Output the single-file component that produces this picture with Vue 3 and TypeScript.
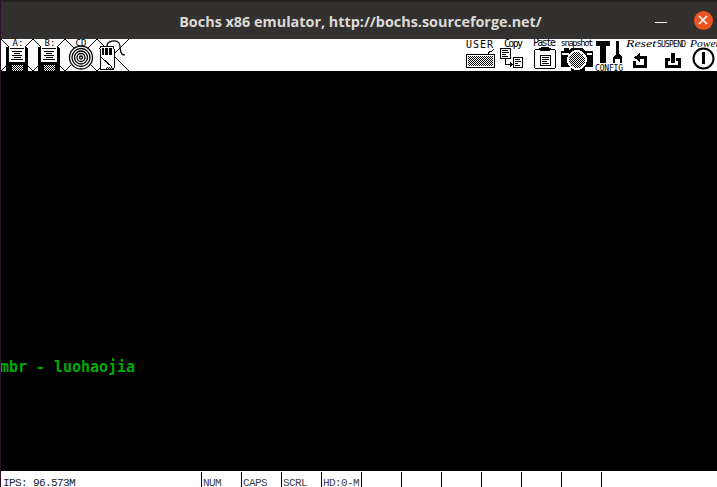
<script setup lang="ts">
const drives: string[] = ['A:', 'B:']
const rings: number[] = [11.5, 9, 6.5, 4, 1.5]
const statusCells: string[] = ['NUM', 'CAPS', 'SCRL', 'HD:0-M', '', '', '', '', '', '', '']
</script>

<template>
  <div class="window">
    <header class="titlebar">
      <h1 class="title">Bochs x86 emulator, http://bochs.sourceforge.net/</h1>
      <span class="minimize"></span>
      <span class="close">
        <svg width="10" height="10" viewBox="0 0 10 10"><path d="M1 1L9 9M9 1L1 9" stroke="#fff" stroke-width="1.6" /></svg>
      </span>
    </header>

    <div class="toolbar">
      <div class="group">
        <svg v-for="d in drives" :key="d" class="btn" viewBox="0 0 32 32">
          <defs>
            <pattern id="dither" width="2" height="2" patternUnits="userSpaceOnUse">
              <rect width="2" height="2" fill="#fff" /><rect width="1" height="1" fill="#000" /><rect x="1" y="1" width="1" height="1" fill="#000" />
            </pattern>
          </defs>
          <path class="cross" d="M0 0L32 32M32 0L0 32" />
          <path d="M5 8H25L27 10V32H5Z" fill="#000" />
          <rect x="8" y="8" width="16" height="15" fill="#fff" />
          <path class="line" d="M9 9.5H23M11 12.5H21M13 14.5H19M11 16.5H21M13 18.5H20M10 20.5H22" />
          <rect x="11" y="26" width="11" height="6" fill="url(#dither)" />
          <text class="label mono" x="17" y="6.5" text-anchor="middle">{{ d }}</text>
        </svg>

        <svg class="btn" viewBox="0 0 32 32">
          <path class="cross" d="M0 0L32 32M32 0L0 32" />
          <circle cx="16" cy="18.5" r="12.5" fill="#fff" />
          <circle v-for="r in rings" :key="r" class="ring" cx="16" cy="18.5" :r="r" />
          <text class="label mono" x="16" y="6.5" text-anchor="middle">CD</text>
        </svg>

        <svg class="btn" viewBox="0 0 32 32">
          <path class="cross" d="M0 0L32 32M32 0L0 32" />
          <rect x="3" y="7.5" width="14" height="23" rx="2" fill="#fff" stroke="#000" />
          <rect x="5" y="9" width="2" height="7" fill="#000" />
          <rect x="8" y="9" width="3" height="7" fill="#000" />
          <rect x="12" y="9" width="3" height="7" fill="#000" />
          <path class="line" d="M4 18L16 29" />
          <rect x="9" y="28" width="7" height="2" fill="url(#dither)" />
          <path class="line smooth" d="M10 7C10 2 19 0 22 4C24 7 22 12 25 15C26 16 27 16 28 16" />
        </svg>
      </div>

      <div class="group">
        <svg class="btn" viewBox="0 0 32 32">
          <text class="label mono wide" x="5" y="8.5" textLength="27">USER</text>
          <rect x="5.5" y="15.5" width="28" height="13" fill="#fff" stroke="#000" />
          <rect x="7" y="17" width="25" height="10" fill="url(#dither)" />
          <path class="line" d="M27 15L29 12H31L33 10" />
        </svg>

        <svg class="btn" viewBox="0 0 32 32">
          <text class="label mono wide" x="11" y="7.5" textLength="19">Copy</text>
          <rect x="7.5" y="9.5" width="10" height="10" fill="#fff" stroke="#000" />
          <path class="line" d="M9 11.5H15M9 13.5H16M9 15.5H13M9 17.5H15" />
          <rect x="20.5" y="18.5" width="9" height="10" fill="#fff" stroke="#000" />
          <path class="line" d="M22 20.5H27M22 22.5H28M22 24.5H25M22 26.5H27" />
          <path class="line" d="M12 20V25.5H19M17 23.5L19 25.5L17 27.5" />
        </svg>

        <svg class="btn" viewBox="0 0 32 32">
          <text class="label mono wide" x="8" y="7" textLength="23">Paste</text>
          <rect x="9.5" y="10.5" width="21" height="19" rx="2" fill="#fff" stroke="#000" stroke-width="1" />
          <path class="line" d="M13 10.5L18 8H22L27 10.5" />
          <rect x="15" y="9" width="10" height="3" fill="#000" />
          <rect x="15.5" y="16.5" width="10" height="10" fill="#fff" stroke="#000" />
          <path class="line" d="M17 18.5H24M17 20.5H24M17 22.5H22M17 24.5H24" />
        </svg>

        <svg class="btn" viewBox="0 0 32 32">
          <text class="label mono" x="3.5" y="6.5" textLength="33">snapshot</text>
          <path d="M4 12H12L14 9H26L28 12H36V28H28V32H14V28H4Z" fill="#000" />
          <rect x="7" y="9" width="5" height="3" fill="#000" />
          <rect x="5" y="14" width="7" height="2" fill="#fff" />
          <rect x="30" y="14" width="5" height="2" fill="#fff" />
          <circle cx="20" cy="21" r="10" fill="#fff" />
          <circle cx="20" cy="21" r="8" fill="url(#dither)" />
        </svg>

        <svg class="btn tool" viewBox="0 0 32 32">
          <path d="M7 2H21V7H17V24H11V7H7Z" fill="#000" />
          <path d="M27 2H30V15L33 18V24H31V20H26V24H24V18L27 15Z" fill="#000" />
          <text class="label mono small" x="6" y="31.5" textLength="28">CONFIG</text>
        </svg>

        <svg class="btn" viewBox="0 0 32 32">
          <text class="label script" x="5" y="8" textLength="30" lengthAdjust="spacingAndGlyphs">Reset</text>
          <path class="thick" d="M18 18.5H24.5V27.5H13.5V22" />
          <path d="M13 18.5L19 14V23Z" fill="#000" />
        </svg>

        <svg class="btn" viewBox="0 0 32 32">
          <text class="label mono small" x="4" y="8" textLength="29">SUSPEND</text>
          <path class="heavy" d="M17 20H13.5V27.5H26.5V20H23" />
          <rect x="18" y="14" width="4" height="10" fill="#000" />
        </svg>

        <svg class="btn" viewBox="0 0 32 32">
          <text class="label script" x="5" y="8" textLength="30" lengthAdjust="spacingAndGlyphs">Power</text>
          <circle class="smoothline" cx="18.5" cy="19.5" r="10" />
          <rect x="17" y="13" width="3" height="12" fill="#000" />
        </svg>
      </div>
    </div>

    <main class="screen">
      <pre class="console">mbr - luohaojia</pre>
    </main>

    <footer class="statusbar">
      <div class="ips">IPS: 96.573M</div>
      <div v-for="(c, i) in statusCells" :key="i" class="cell">{{ c }}</div>
    </footer>
  </div>
</template>

<style>
html, body { margin: 0; background: #000; }
</style>

<style scoped>
.window {
  width: 717px;
  height: 487px;
  box-sizing: border-box;
  display: flex;
  flex-direction: column;
  overflow: hidden;
  border-left: 1px solid #2c1128;
  background: #6a1436;
}
.titlebar {
  position: relative;
  height: 37px;
  flex: none;
  margin-left: -1px;
  padding-left: 4px;
  display: flex;
  align-items: center;
  justify-content: center;
  background: #333130;
  border-top: 2px solid #232120;
  border-top-left-radius: 4px;
}
.title {
  margin: 0;
  font: 700 14.4px "Open Sans", "Noto Sans", sans-serif;
  color: #dcdad6;
  white-space: nowrap;
  position: relative;
  top: 1px;
}
.minimize {
  position: absolute;
  left: 655px;
  top: 20px;
  width: 12px;
  height: 1px;
  background: #f2f2f0;
}
.close {
  position: absolute;
  left: 693.5px;
  top: 8.5px;
  width: 19px;
  height: 19px;
  border-radius: 50%;
  background: #e95420;
  display: flex;
  align-items: center;
  justify-content: center;
}
.toolbar {
  height: 32px;
  flex: none;
  display: flex;
  justify-content: space-between;
  background: #fff;
}
.group { display: flex; }
.btn {
  display: block;
  width: 32px;
  height: 32px;
  overflow: visible;
  shape-rendering: crispEdges;
}
.cross { fill: none; stroke: #000; stroke-width: 1; }
.line { fill: none; stroke: #000; stroke-width: 1; }
.line.smooth { shape-rendering: auto; stroke-width: 1.2; }
.ring { fill: none; stroke: #000; stroke-width: 1.3; shape-rendering: auto; }
.thick { fill: none; stroke: #000; stroke-width: 3; }
.heavy { fill: none; stroke: #000; stroke-width: 3; stroke-linejoin: round; }
.smoothline { fill: none; stroke: #000; stroke-width: 2; shape-rendering: auto; }
.label { font-size: 9px; fill: #000; }
.mono { font-family: "DejaVu Sans Mono", "Liberation Mono", monospace; }
.wide { font-size: 10px; }
.small { font-size: 8px; }
.script { font-family: "Liberation Serif", serif; font-style: italic; font-size: 11px; }
.screen {
  flex: 1;
  min-height: 0;
  padding-top: 288px;
  box-sizing: border-box;
  background: #000;
}
.console {
  margin: 0 0 0 -1px;
  height: 16px;
  font: 700 15px/17px "DejaVu Sans Mono", monospace;
  letter-spacing: -0.03px;
  color: #00aa00;
}
.statusbar {
  height: 16px;
  flex: none;
  display: grid;
  grid-template-columns: 200px repeat(11, 40px) 1fr;
  background: #fff;
  overflow: hidden;
  font: 11px/24px "Liberation Mono", monospace;
  letter-spacing: -0.6px;
  color: #222;
}
.ips { padding-left: 2px; }
.cell {
  border-left: 1px solid #000;
  margin-top: 1px;
  line-height: 23px;
  padding-left: 1px;
  color: #444;
}
</style>
